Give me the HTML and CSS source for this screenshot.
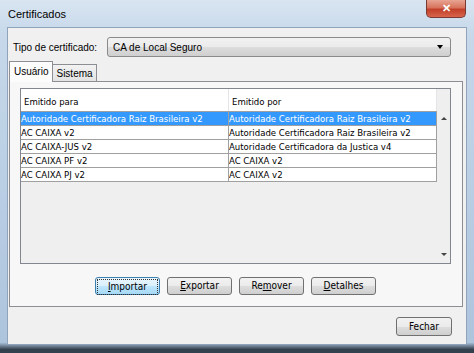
FILE: index.html
```html
<!DOCTYPE html>
<html>
<head>
    <meta charset="utf-8">
    <title>Certificados</title>
    <link rel="stylesheet" href="styles.css">
</head>
<body>
    <div class="window">
        <div class="titlebar">
            <span class="title">Certificados</span>
            <div class="close">&#x2715;</div>
        </div>

        <div class="client">
            <div class="typerow">
                <label class="typelabel">Tipo de certificado:</label>
                <div class="combo">
                    <span>CA de Local Seguro</span>
                    <span class="arrow"></span>
                </div>
            </div>

            <div class="tabs">
                <div class="tab active">Usuário</div>
                <div class="tab">Sistema</div>
            </div>

            <div class="panel">
                <div class="list">
                    <div class="grid">
                        <div class="head">
                            <div class="hcell">Emitido para</div>
                            <div class="hcell">Emitido por</div>
                        </div>
                        <div class="row selected">
                            <div class="cell">Autoridade Certificadora Raiz Brasileira v2</div>
                            <div class="cell">Autoridade Certificadora Raiz Brasileira v2</div>
                        </div>
                        <div class="row">
                            <div class="cell">AC CAIXA v2</div>
                            <div class="cell">Autoridade Certificadora Raiz Brasileira v2</div>
                        </div>
                        <div class="row">
                            <div class="cell">AC CAIXA-JUS v2</div>
                            <div class="cell">Autoridade Certificadora da Justica v4</div>
                        </div>
                        <div class="row">
                            <div class="cell">AC CAIXA PF v2</div>
                            <div class="cell">AC CAIXA v2</div>
                        </div>
                        <div class="row">
                            <div class="cell">AC CAIXA PJ v2</div>
                            <div class="cell">AC CAIXA v2</div>
                        </div>
                    </div>
                    <div class="scrollbar">
                        <span class="up"></span>
                        <span class="down"></span>
                    </div>
                </div>

                <div class="actions">
                    <div class="btn default"><span class="focus"><u>I</u>mportar</span></div>
                    <div class="btn"><u>E</u>xportar</div>
                    <div class="btn">Re<u>m</u>over</div>
                    <div class="btn"><u>D</u>etalhes</div>
                </div>
            </div>

            <div class="footer">
                <div class="btn close-btn">Fechar</div>
            </div>
        </div>
    </div>
</body>
</html>
```

FILE: styles.css
```css
body
{
    margin: 0;
    background: #b7cbe0;
}

.window
{
    width: 474px;
    height: 353px;
    display: flex;
    flex-direction: column;
    background: linear-gradient(180deg, #d9e5f1 0%, #c6d8ea 10%, #b8cde3 60%, #adc4dd 97%, #33414f 99%);
    font-family: "Liberation Sans", Arial, sans-serif;
    font-size: 10px;
    color: #000;
}

.titlebar
{
    height: 27px;
    display: flex;
    align-items: flex-start;
    justify-content: space-between;
}

.title
{
    margin: 8px 0 0 8px;
    font-size: 11px;
    color: #000;
}

.close
{
    width: 40px;
    height: 18px;
    margin-right: 8px;
    border: 1px solid #7a3a33;
    border-top: none;
    border-radius: 0 0 5px 5px;
    box-sizing: border-box;
    background: linear-gradient(180deg, #e8a493 0%, #d7735c 45%, #c2402a 55%, #d7654c 100%);
    color: #fff;
    font-size: 11px;
    font-weight: bold;
    text-align: center;
    line-height: 16px;
}

.client
{
    margin: 0 7px;
    height: 318px;
    box-sizing: border-box;
    border: 1px solid #8fa4ba;
    background: #f0f0f0;
    display: flex;
    flex-direction: column;
}

.typerow
{
    display: flex;
    align-items: center;
    margin: 9px 15px 0 5px;
    height: 20px;
}

.typelabel
{
    width: 94px;
    white-space: nowrap;
}

.combo
{
    flex: 1;
    height: 20px;
    box-sizing: border-box;
    border: 1px solid #8a8a8a;
    border-radius: 3px;
    background: linear-gradient(180deg, #f2f2f2 0%, #ebebeb 50%, #dddddd 51%, #cfcfcf 100%);
    display: flex;
    align-items: center;
    justify-content: space-between;
    padding: 0 7px 0 5px;
}

.arrow
{
    width: 0;
    height: 0;
    border-left: 3px solid transparent;
    border-right: 3px solid transparent;
    border-top: 4px solid #000;
}

.tabs
{
    display: flex;
    align-items: flex-end;
    margin: 4px 0 0 1px;
    height: 20px;
}

.tab
{
    height: 17px;
    box-sizing: border-box;
    padding: 0 3px;
    border: 1px solid #8c8e94;
    border-bottom: none;
    background: linear-gradient(180deg, #f2f2f2, #e3e3e3);
    line-height: 17px;
    margin-left: -1px;
}

.tab.active
{
    padding: 0 4px;
    background: #fcfcfc;
    margin-left: 0;
    position: relative;
    z-index: 1;
    margin-bottom: -1px;
    height: 21px;
    line-height: 19px;
}

.panel
{
    margin: 0 3px 0 1px;
    height: 226px;
    box-sizing: border-box;
    border: 1px solid #8c8e94;
    background: #f7f7f7;
    padding: 6px 11px 0 10px;
    display: flex;
    flex-direction: column;
}

.list
{
    height: 176px;
    box-sizing: border-box;
    border: 1px solid #82878f;
    background: #efefef;
    display: flex;
}

.grid
{
    flex: 1;
    display: flex;
    flex-direction: column;
    font-family: "DejaVu Sans Condensed", sans-serif;
    font-size: 9.5px;
}

.head
{
    display: flex;
    height: 22px;
    background: #fff;
}

.hcell
{
    width: 208px;
    box-sizing: border-box;
    padding: 7px 0 0 3px;
    border-right: 1px solid #e3e5e8;
}

.row
{
    display: flex;
    height: 14px;
    box-sizing: border-box;
    background: #fff;
    border-bottom: 1px solid #a0a0a0;
}

.cell
{
    width: 208px;
    box-sizing: border-box;
    border-right: 1px solid #a0a0a0;
    line-height: 13px;
    white-space: nowrap;
    overflow: hidden;
}

.row.selected
{
    height: 15px;
    background: #3399ff;
    color: #fff;
    border-top: 1px solid #a0a0a0;
}

.scrollbar
{
    width: 16px;
    display: flex;
    flex-direction: column;
    justify-content: space-between;
    align-items: center;
    padding: 28px 0 7px;
    background: #efefef;
}

.up, .down
{
    width: 0;
    height: 0;
    border-left: 3px solid transparent;
    border-right: 3px solid transparent;
}

.up
{
    border-bottom: 3px solid #444;
}

.down
{
    border-top: 3px solid #444;
}

.actions
{
    display: flex;
    justify-content: center;
    gap: 7px;
    margin-top: 13px;
}

.btn
{
    width: 65px;
    height: 18px;
    box-sizing: border-box;
    border: 1px solid #707070;
    border-radius: 3px;
    background: linear-gradient(180deg, #f2f2f2 0%, #ebebeb 50%, #dddddd 51%, #cfcfcf 100%);
    text-align: center;
    line-height: 16px;
    font-family: "DejaVu Sans Condensed", sans-serif;
    font-size: 10px;
}

.btn.default
{
    border-color: #3c7fb1;
    background: linear-gradient(180deg, #eaf6fd 0%, #d9f0fc 50%, #bee6fd 51%, #a7d9f5 100%);
    padding: 1px;
}

.focus
{
    display: block;
    height: 14px;
    line-height: 14px;
    border: 1px dotted #333;
}

.footer
{
    display: flex;
    justify-content: flex-end;
    margin: 10px 14px 0 0;
}

.close-btn
{
    width: 56px;
    height: 19px;
    line-height: 17px;
}
```
